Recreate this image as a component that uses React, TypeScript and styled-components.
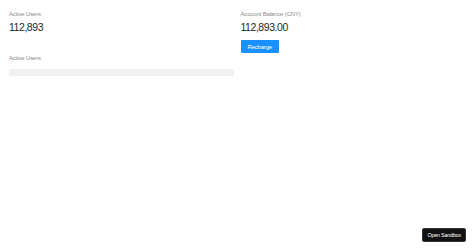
import styled, { createGlobalStyle } from 'styled-components';

const GlobalStyle = createGlobalStyle`
  html, body {
    margin: 0;
    padding: 0;
    background: #fff;
    font-family: "Liberation Sans", Arial, sans-serif;
  }
`;

type StatProps = {
  title: string;
  value: number;
  precision?: number;
  loading?: boolean;
};

const formatValue = (value: number, precision?: number) =>
  value.toLocaleString('en-US', {
    minimumFractionDigits: precision ?? 0,
    maximumFractionDigits: precision ?? 0,
  });

const Statistic: React.FC<StatProps> = ({ title, value, precision, loading }) => (
  <StatBox>
    <StatTitle>{title}</StatTitle>
    {loading ? (
      <SkeletonBar />
    ) : (
      <StatValue>{formatValue(value, precision)}</StatValue>
    )}
  </StatBox>
);

const App = () => (
  <>
    <GlobalStyle />
    <Page>
      <Row>
        <Col>
          <Statistic title="Active Users" value={112893} />
        </Col>
        <Col>
          <Statistic title="Account Balance (CNY)" value={112893} precision={2} />
          <PrimaryButton>Recharge</PrimaryButton>
        </Col>
        <Col>
          <Statistic title="Active Users" value={112893} loading />
        </Col>
      </Row>
    </Page>
    <SandboxButton>Open Sandbox</SandboxButton>
  </>
);

const Page = styled.div`
  padding: 9px 9px;
`;

const Row = styled.div`
  display: grid;
  grid-template-columns: 1fr 1fr;
  column-gap: 7px;
  align-items: start;
`;

const Col = styled.div`
  display: flex;
  flex-direction: column;
  align-items: flex-start;
  min-width: 0;
`;

const StatBox = styled.div`
  width: 100%;
  color: #262626;
`;

const StatTitle = styled.div`
  font-size: 6px;
  line-height: 10px;
  letter-spacing: -0.15px;
  color: #8c8c8c;
  margin-bottom: 2px;
`;

const StatValue = styled.div`
  font-size: 10.5px;
  line-height: 13px;
  letter-spacing: -0.45px;
  color: #262626;
`;

const SkeletonBar = styled.div`
  width: 100%;
  height: 7px;
  margin-top: 6px;
  border-radius: 2px;
  background: #f0f0f0;
`;

const PrimaryButton = styled.button`
  margin-top: 6px;
  height: 13px;
  padding: 0 7px;
  border: none;
  border-radius: 1px;
  background: #1890ff;
  color: #fff;
  font-family: inherit;
  font-size: 6px;
  letter-spacing: -0.2px;
  cursor: pointer;
`;

const SandboxButton = styled.button`
  position: fixed;
  right: 8px;
  bottom: 6px;
  height: 14px;
  padding: 0 4px;
  border: 1px solid #333;
  border-radius: 2px;
  background: #111;
  color: #fff;
  font-family: inherit;
  font-size: 5.4px;
  letter-spacing: -0.2px;
`;

export default App;
